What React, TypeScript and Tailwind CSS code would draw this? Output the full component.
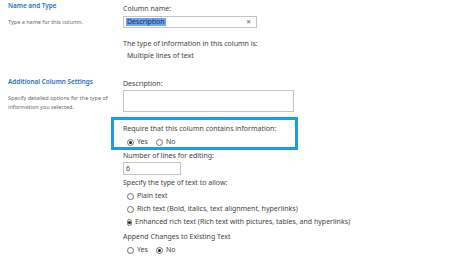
import React from 'react';

const FONT = { fontFamily: '"Noto Sans", "Open Sans", "Liberation Sans", sans-serif' };

function Radio({ label, checked }: { label: string; checked?: boolean }) {
  return (
    <span className="flex items-center gap-[3px]">
      <span className="flex h-[7px] w-[7px] items-center justify-center rounded-full border border-[#707070] bg-white">
        {checked && <span className="h-[3px] w-[3px] rounded-full bg-[#222]" />}
      </span>
      <span>{label}</span>
    </span>
  );
}

export default function App() {
  return (
    <div className="flex h-[263px] w-[474px] bg-white text-[7px] leading-[8px] text-[#444]" style={FONT}>
      {/* Left descriptions */}
      <div className="w-[115px] shrink-0 pl-[8px]">
        <div className="pt-[2px] text-[6.4px] font-semibold text-[#1f6fc1]">Name and Type</div>
        <div className="mt-[8px] text-[5.5px] leading-[8px] text-[#6b6b6b]">Type a name for this column.</div>
        <div className="mt-[52px] text-[6.4px] font-semibold text-[#1f6fc1]">Additional Column Settings</div>
        <div className="mt-[8px] text-[5.5px] leading-[9px] text-[#6b6b6b]">
          Specify detailed options for the type of
          <br />
          information you selected.
        </div>
      </div>

      {/* Right fields */}
      <div className="flex w-[200px] flex-col pt-[5px] pl-[8px]">
        <div>Column name:</div>
        <div className="mt-[3px] flex h-[12px] w-[134px] items-center justify-between border border-[#c4c4c4] px-[2px]">
          <span className="bg-[#6fa6e8] px-[1px] text-[#0f2c66]">Description</span>
          <span className="pr-[3px] text-[6px] text-[#555]">✕</span>
        </div>
        <div className="mt-[12px]">The type of information in this column is:</div>
        <div className="mt-[4px] pl-[4px]">Multiple lines of text</div>
        <div className="mt-[20px]">Description:</div>
        <div className="mt-[2px] h-[22px] w-[171px] border border-[#c4c4c4]" />

        <div className="-ml-[12px] mt-[5px] h-[33px] w-[187px] border-[3px] border-[#1b9de2] pl-[9px] pt-[5px]">
          <div>Require that this column contains information:</div>
          <div className="mt-[5px] flex gap-[8px] pl-[4px]">
            <Radio label="Yes" checked />
            <Radio label="No" />
          </div>
        </div>

        <div className="mt-[2px]">Number of lines for editing:</div>
        <div className="mt-[2px] flex h-[13px] w-[58px] items-center border border-[#c4c4c4] pl-[2px]">6</div>
        <div className="mt-[4px]">Specify the type of text to allow:</div>
        <div className="mt-[5px] flex flex-col gap-[5px] whitespace-nowrap pl-[4px]">
          <Radio label="Plain text" />
          <Radio label="Rich text (Bold, italics, text alignment, hyperlinks)" />
          <Radio label="Enhanced rich text (Rich text with pictures, tables, and hyperlinks)" checked />
        </div>
        <div className="mt-[7px]">Append Changes to Existing Text</div>
        <div className="mt-[5px] flex gap-[8px] pl-[4px]">
          <Radio label="Yes" />
          <Radio label="No" checked />
        </div>
      </div>
    </div>
  );
}
